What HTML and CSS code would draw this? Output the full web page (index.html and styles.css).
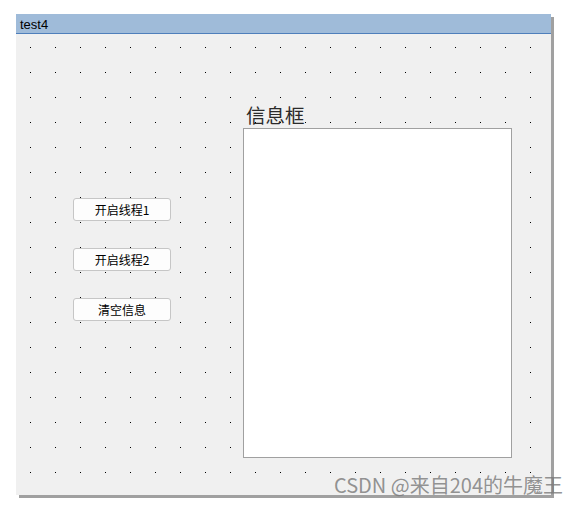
FILE: index.html
```html
<!DOCTYPE html>
<html lang="zh">
<head>
<meta charset="utf-8">
<title>test4</title>
<link rel="stylesheet" href="styles.css">
</head>
<body>
<div class="page">
  <div class="window">
    <div class="titlebar">test4</div>
    <div class="canvas">
      <div class="buttons">
        <button class="btn">开启线程1</button>
        <button class="btn">开启线程2</button>
        <button class="btn">清空信息</button>
      </div>
      <div class="infogroup">
        <div class="infolabel">信息框</div>
        <div class="infobox"></div>
      </div>
    </div>
  </div>
</div>
<div class="watermark">CSDN @来自204的牛魔王</div>
</body>
</html>
```

FILE: styles.css
```css
html, body {
  margin: 0;
  padding: 0;
  background: #ffffff;
  width: 579px;
  height: 505px;
  overflow: hidden;
}
.page {
  padding: 14px 0 0 16px;
}
.window {
  width: 535px;
  height: 481px;
  display: flex;
  flex-direction: column;
  box-shadow: 3px 3px 0 #a0a0a0;
  background: #f0f0f0;
}
.titlebar {
  height: 20px;
  line-height: 19px;
  padding: 1px 0 0 4px;
  box-sizing: border-box;
  background: #9fbbd9;
  border-bottom: 1px solid #4f7fbb;
  font-family: "Liberation Sans", Arial, sans-serif;
  font-size: 13px;
  color: #000;
}
.canvas {
  flex: 1;
  display: flex;
  align-items: flex-start;
  padding-left: 57px;
  background-color: #f0f0f0;
  background-image: conic-gradient(at 1px 1px, transparent 270deg, #000 0);
  background-size: 25px 25px;
  background-position: 14px 13px;
}
.buttons {
  display: flex;
  flex-direction: column;
  gap: 27px;
  padding-top: 164px;
  width: 98px;
}
.btn {
  height: 23px;
  width: 98px;
  margin: 0;
  padding: 0;
  box-sizing: border-box;
  border: 1px solid #c6c6c6;
  border-radius: 3px;
  background: #fdfdfd;
  font-family: "Noto Sans CJK SC", sans-serif;
  font-size: 12px;
  line-height: 21px;
  color: #000;
}
.infogroup {
  margin-left: 72px;
  padding-top: 68px;
  display: flex;
  flex-direction: column;
}
.infolabel {
  height: 26px;
  line-height: 26px;
  padding-left: 3px;
  font-family: "Noto Sans CJK SC", sans-serif;
  font-size: 19.5px;
  color: #2a2a2a;
}
.infobox {
  width: 269px;
  height: 330px;
  box-sizing: border-box;
  border: 1px solid #a0a0a0;
  background: #ffffff;
}
.watermark {
  position: absolute;
  top: 475px;
  right: 16px;
  font-family: "Noto Sans CJK SC", sans-serif;
  font-size: 20px;
  line-height: 20px;
  color: rgba(120, 120, 120, 0.8);
  white-space: nowrap;
}
```
